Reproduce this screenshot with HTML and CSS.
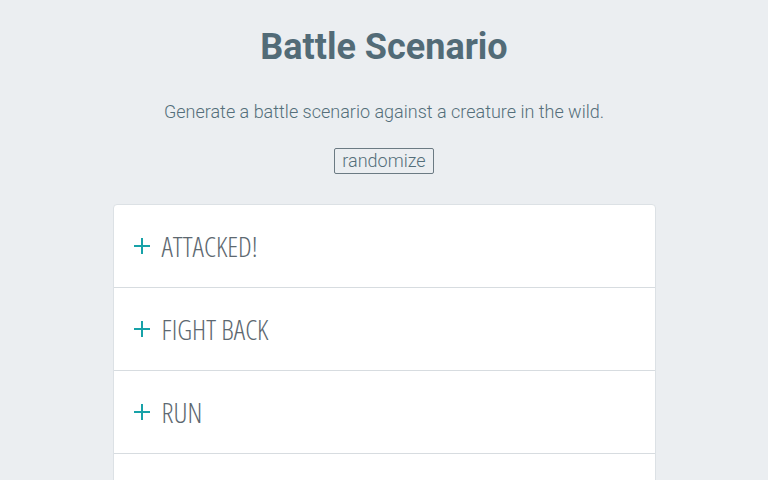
FILE: index.html
```html
<!DOCTYPE html>
<html lang="en">
<head>
<meta charset="utf-8">
<title>Battle Scenario</title>
<link rel="stylesheet" href="styles.css">
</head>
<body>
<main class="page">
  <h1 class="title">Battle Scenario</h1>
  <p class="subtitle">Generate a battle scenario against a creature in the wild.</p>
  <div class="actions"><button class="btn" type="button">randomize</button></div>
  <section class="accordion">
    <div class="item">
      <svg class="plus" viewBox="0 0 16 16" width="16" height="16"><path d="M8 0V16M0 8H16" stroke="#17a2a8" stroke-width="2" fill="none"/></svg>
      <span class="label">ATTACKED!</span>
    </div>
    <div class="item">
      <svg class="plus" viewBox="0 0 16 16" width="16" height="16"><path d="M8 0V16M0 8H16" stroke="#17a2a8" stroke-width="2" fill="none"/></svg>
      <span class="label">FIGHT BACK</span>
    </div>
    <div class="item">
      <svg class="plus" viewBox="0 0 16 16" width="16" height="16"><path d="M8 0V16M0 8H16" stroke="#17a2a8" stroke-width="2" fill="none"/></svg>
      <span class="label">RUN</span>
    </div>
    <div class="item item-empty"></div>
  </section>
</main>
</body>
</html>
```
FILE: styles.css
```css
html, body {
  margin: 0;
  padding: 0;
  background: #ebeef1;
  font-family: Roboto, "Liberation Sans", sans-serif;
  color: #546e7a;
}
.page {
  width: 543px;
  margin: 0 auto;
  padding-top: 26px;
  display: flex;
  flex-direction: column;
  align-items: stretch;
}
.title {
  margin: 0;
  text-align: center;
  font-size: 36px;
  font-weight: 700;
  line-height: 42px;
  color: #526b77;
}
.subtitle {
  margin: 0;
  margin-top: 32px;
  text-align: center;
  font-size: 18px;
  font-weight: 300;
  line-height: 24px;
  color: #546e7a;
}
.actions {
  display: flex;
  justify-content: center;
  margin-top: 24px;
}
.btn {
  font-family: Roboto, "Liberation Sans", sans-serif;
  font-size: 18px;
  font-weight: 300;
  color: #546e7a;
  background: #ebeef1;
  border: 1px solid #6b7a83;
  border-radius: 2px;
  padding: 0 7px;
  height: 26px;
  line-height: 24px;
}
.accordion {
  margin-top: 30px;
  background: #fff;
  border: 1px solid #dce1e5;
  border-radius: 4px;
  display: flex;
  flex-direction: column;
}
.item {
  height: 82px;
  display: flex;
  align-items: center;
  padding-left: 20px;
  gap: 12px;
  border-bottom: 1px solid #d7dce0;
}
.item:last-child {
  border-bottom: none;
}
.plus {
  flex: none;
}
.label {
  font-family: "Open Sans", "Liberation Sans Narrow", sans-serif;
  font-stretch: 75%;
  font-weight: 300;
  font-size: 28px;
  color: #5d6870;
}
```
